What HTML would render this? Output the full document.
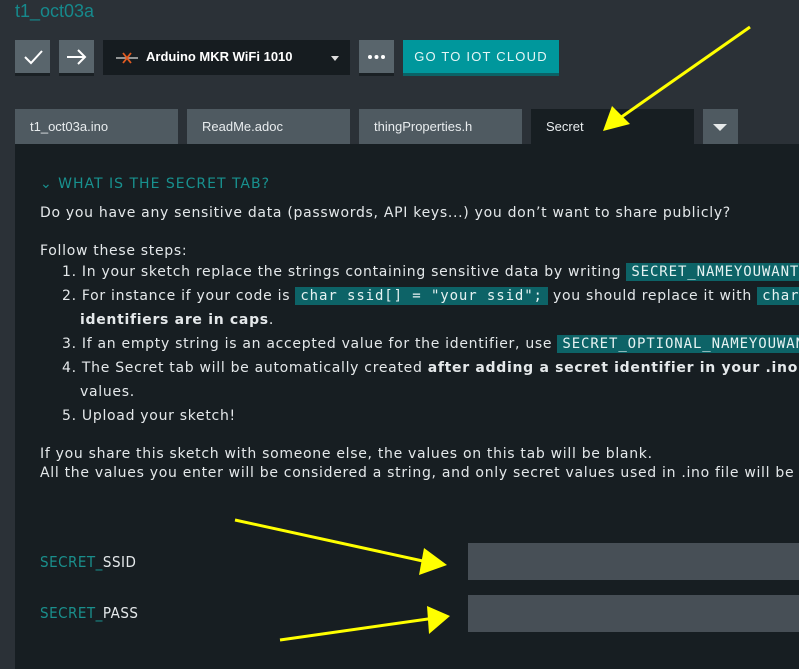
<!DOCTYPE html>
<html><head><style>
*{margin:0;padding:0;box-sizing:border-box}
html,body{width:799px;height:669px;overflow:hidden}
body{background:#2b3137;font-family:"Liberation Sans","DejaVu Sans",sans-serif;color:#e4e8ea}
#w{position:relative;width:799px;height:669px;overflow:hidden}
.a{position:absolute}
.btn{position:absolute;top:40px;height:33px;background:#59656c;box-shadow:0 3px 0 #1a2024}
.tab{position:absolute;top:109px;height:35px;background:#4f5a61;color:#e8ecee;font-size:13px;line-height:36px;padding-left:15px;width:163px}
.panel{position:absolute;left:15px;top:144px;width:784px;height:525px;background:#171e22}
.t{position:absolute;left:40px;font-family:"DejaVu Sans",sans-serif;font-size:14px;letter-spacing:0.7px;color:#e4e8ea;white-space:nowrap}
.c{background:#0d6367;color:#e6f2f2;font-family:"DejaVu Sans Mono",monospace;padding:1px 5px;letter-spacing:0.9px}
b{font-weight:bold}
.lab{position:absolute;left:40px;font-size:15px;letter-spacing:0.5px;font-family:"DejaVu Sans Condensed","DejaVu Sans",sans-serif}
.inp{position:absolute;left:468px;width:331px;height:37px;background:#474f56}
</style></head><body><div id="w">
<div class="a" style="left:15px;top:1px;font-size:18px;color:#16898c">t1_oct03a</div>
<div class="btn" style="left:15px;width:35px"><svg width="35" height="33"><path d="M10 17l6 6 11-12" stroke="#fff" stroke-width="2" fill="none"/></svg></div>
<div class="btn" style="left:59px;width:35px"><svg width="35" height="33"><path d="M8 17h18M19 10l7 7-7 7" stroke="#fff" stroke-width="2" fill="none"/></svg></div>
<div class="a" style="left:103px;top:40px;width:247px;height:35px;background:#161c20">
<svg class="a" style="left:12px;top:10px" width="24" height="16"><path d="M1 8h22" stroke="#bbb" stroke-width="1.5"/><path d="M8 3l8 10M16 3l-8 10" stroke="#e05a20" stroke-width="1.8"/></svg>
<div class="a" style="left:43px;top:9px;font-size:13px;font-weight:bold;color:#fff">Arduino MKR WiFi 1010</div>
<div class="a" style="left:228px;top:16px;border:4px solid transparent;border-top:5px solid #ddd"></div></div>
<div class="btn" style="left:359px;width:35px"><svg width="35" height="33"><g fill="#fff"><circle cx="11" cy="17" r="2"/><circle cx="17.5" cy="17" r="2"/><circle cx="24" cy="17" r="2"/></g></svg></div>
<div class="btn" style="left:403px;width:156px;background:#00979c;box-shadow:0 3px 0 #0b6266;color:#e6f6f6;font-size:13px;letter-spacing:1.2px;text-align:center;line-height:33px">GO TO IOT CLOUD</div>
<div class="tab" style="left:15px">t1_oct03a.ino</div>
<div class="tab" style="left:187px">ReadMe.adoc</div>
<div class="tab" style="left:359px">thingProperties.h</div>
<div class="tab" style="left:531px;background:#171e22">Secret</div>
<div class="tab" style="left:703px;width:35px;padding:0"><div class="a" style="left:10px;top:15px;border:7px solid transparent;border-top:7px solid #e6e9ea;border-bottom:0"></div></div>
<div class="panel"></div>
<div class="t" style="top:176px;color:#18918f;letter-spacing:1px">⌄ WHAT IS THE SECRET TAB?</div>
<div class="t" style="top:205px">Do you have any sensitive data (passwords, API keys...) you don’t want to share publicly?</div>
<div class="t" style="top:243px">Follow these steps:</div>
<div class="t" style="top:264px;left:62px">1. In your sketch replace the strings containing sensitive data by writing <span class="c">SECRET_NAMEYOUWANT</span></div>
<div class="t" style="top:288px;left:62px">2. For instance if your code is <span class="c">char ssid[] = "your ssid";</span> you should replace it with <span class="c">char ssid[]</span></div>
<div class="t" style="top:312px;left:80px"><b>identifiers are in caps</b>.</div>
<div class="t" style="top:336px;left:62px">3. If an empty string is an accepted value for the identifier, use <span class="c">SECRET_OPTIONAL_NAMEYOUWANT</span></div>
<div class="t" style="top:360px;left:62px">4. The Secret tab will be automatically created <b>after adding a secret identifier in your .ino file</b></div>
<div class="t" style="top:384px;left:80px">values.</div>
<div class="t" style="top:408px;left:62px">5. Upload your sketch!</div>
<div class="t" style="top:446px">If you share this sketch with someone else, the values on this tab will be blank.</div>
<div class="t" style="top:465px">All the values you enter will be considered a string, and only secret values used in .ino file will be saved.</div>
<div class="lab" style="top:553px"><span style="color:#1a8f8c">SECRET_</span>SSID</div>
<div class="lab" style="top:604px"><span style="color:#1a8f8c">SECRET_</span>PASS</div>
<div class="inp" style="top:543px"></div>
<div class="inp" style="top:595px"></div>
<svg class="a" style="left:0;top:0" width="799" height="669">
<g stroke="#ffff00" stroke-width="3" fill="#ffff00">
<line x1="750" y1="27" x2="620" y2="118"/><polygon points="603,131 612,106 630,124" stroke="none"/>
<line x1="235" y1="520" x2="432" y2="563"/><polygon points="447,565 424,548 419,575" stroke="none"/>
<line x1="280" y1="640" x2="435" y2="618"/><polygon points="450,616 427,606 429,634" stroke="none"/>
</g></svg>
</div></body></html>
